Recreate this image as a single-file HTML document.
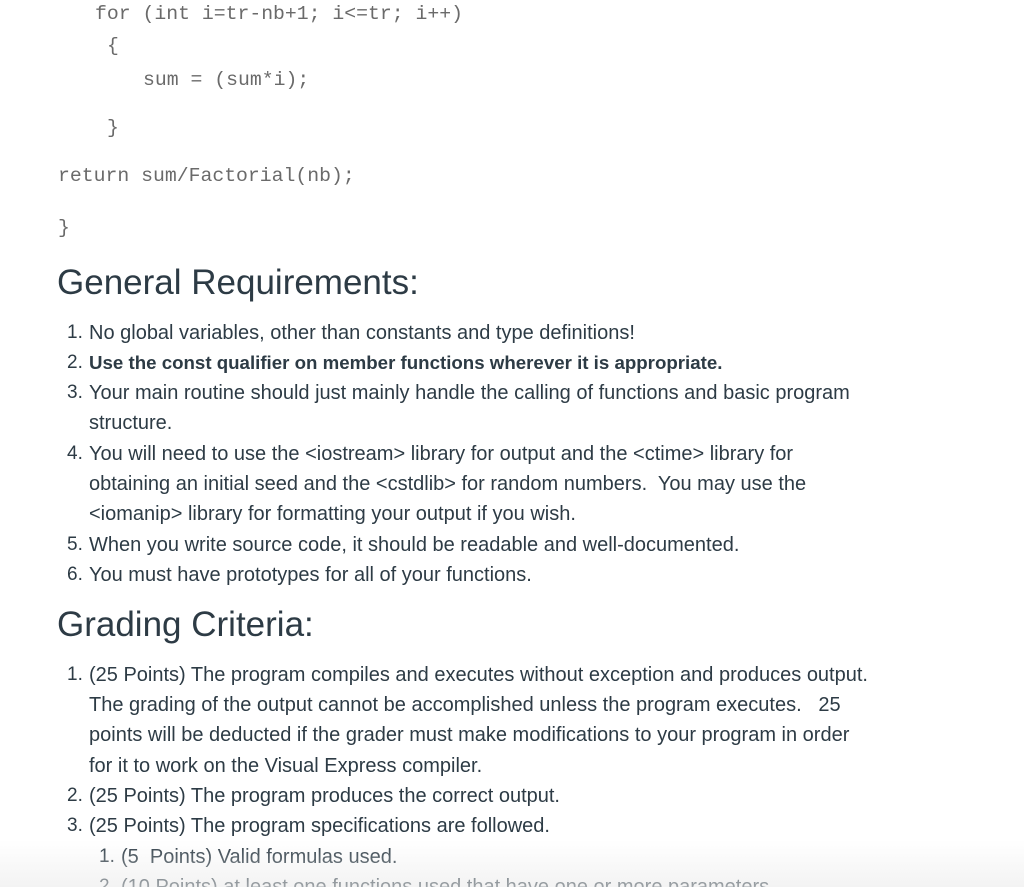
<!DOCTYPE html>
<html><head><meta charset="utf-8"><style>
html,body{margin:0;padding:0;background:#fff;width:1024px;height:887px;overflow:hidden;position:relative}
.c{position:absolute;font-family:"Liberation Mono",monospace;font-size:19.8px;color:#6a6a6a;white-space:pre;line-height:24px}
.t{position:absolute;font-family:"Liberation Sans",sans-serif;font-size:20px;color:#2d3b45;white-space:nowrap;line-height:24px;letter-spacing:0px}
.h{position:absolute;font-family:"Liberation Sans",sans-serif;font-size:35px;color:#2d3b45;white-space:nowrap;line-height:44px}
.n{position:absolute;font-family:"Liberation Sans",sans-serif;font-size:19px;color:#2d3b45;line-height:24px}
.fade{position:absolute;left:0;top:840px;width:1024px;height:47px;background:linear-gradient(rgba(255,255,255,0),rgba(235,235,235,0.6))}
</style></head><body>
<div class="c" style="left:95px;top:2px">for (int i=tr-nb+1; i&lt;=tr; i++)</div>
<div class="c" style="left:107px;top:34px">{</div>
<div class="c" style="left:143px;top:68px">sum = (sum*i);</div>
<div class="c" style="left:107px;top:116px">}</div>
<div class="c" style="left:58px;top:164px">return sum/Factorial(nb);</div>
<div class="c" style="left:58px;top:216px">}</div>

<div class="h" style="left:57px;top:261px">General Requirements:</div>
<div class="n" style="left:67px;top:321px">1.</div><div class="t" style="left:89px;top:321px">No global variables, other than constants and type definitions!</div>
<div class="n" style="left:67px;top:351px">2.</div><div class="t" style="left:89px;top:351px;font-weight:bold;font-size:18.7px">Use the const qualifier on member functions wherever it is appropriate.</div>
<div class="n" style="left:67px;top:381px">3.</div><div class="t" style="left:89px;top:381px">Your main routine should just mainly handle the calling of functions and basic program</div>
<div class="t" style="left:89px;top:411px">structure.</div>
<div class="n" style="left:67px;top:442px">4.</div><div class="t" style="left:89px;top:442px">You will need to use the &lt;iostream&gt; library for output and the &lt;ctime&gt; library for</div>
<div class="t" style="left:89px;top:472px">obtaining an initial seed and the &lt;cstdlib&gt; for random numbers.&nbsp; You may use the</div>
<div class="t" style="left:89px;top:502px">&lt;iomanip&gt; library for formatting your output if you wish.</div>
<div class="n" style="left:67px;top:533px">5.</div><div class="t" style="left:89px;top:533px">When you write source code, it should be readable and well-documented.</div>
<div class="n" style="left:67px;top:563px">6.</div><div class="t" style="left:89px;top:563px">You must have prototypes for all of your functions.</div>

<div class="h" style="left:57px;top:603px">Grading Criteria:</div>
<div class="n" style="left:67px;top:663px">1.</div><div class="t" style="left:89px;top:663px">(25 Points) The program compiles and executes without exception and produces output.</div>
<div class="t" style="left:89px;top:693px">The grading of the output cannot be accomplished unless the program executes.&nbsp;&nbsp; 25</div>
<div class="t" style="left:89px;top:723px">points will be deducted if the grader must make modifications to your program in order</div>
<div class="t" style="left:89px;top:754px">for it to work on the Visual Express compiler.</div>
<div class="n" style="left:67px;top:784px">2.</div><div class="t" style="left:89px;top:784px">(25 Points) The program produces the correct output.</div>
<div class="n" style="left:67px;top:814px">3.</div><div class="t" style="left:89px;top:814px">(25 Points) The program specifications are followed.</div>
<div class="n" style="left:99px;top:845px">1.</div><div class="t" style="left:121px;top:845px">(5&nbsp; Points) Valid formulas used.</div>
<div class="n" style="left:99px;top:875px">2.</div><div class="t" style="left:121px;top:875px">(10 Points) at least one functions used that have one or more parameters.</div>
<div class="fade"></div>
</body></html>
